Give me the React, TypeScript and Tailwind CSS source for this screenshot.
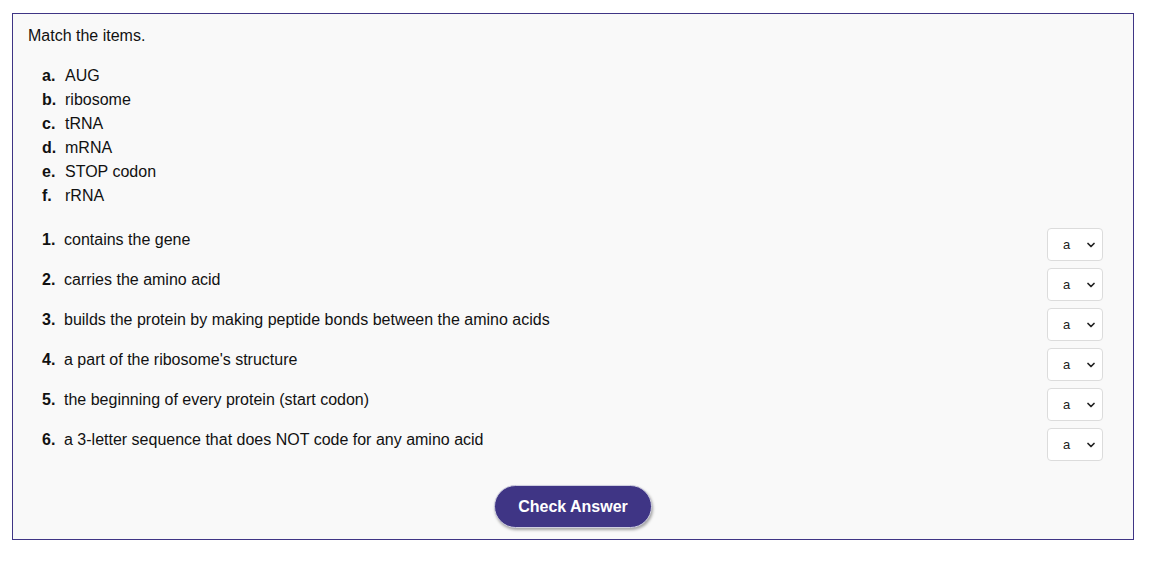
import { ChevronDown } from "lucide-react";

const items = [
    { key: "a", text: "AUG" },
    { key: "b", text: "ribosome" },
    { key: "c", text: "tRNA" },
    { key: "d", text: "mRNA" },
    { key: "e", text: "STOP codon" },
    { key: "f", text: "rRNA" },
];

const prompts = [
    "contains the gene",
    "carries the amino acid",
    "builds the protein by making peptide bonds between the amino acids",
    "a part of the ribosome's structure",
    "the beginning of every protein (start codon)",
    "a 3-letter sequence that does NOT code for any amino acid",
];

function Picker() {
    return (
        <div className="mt-[1px] flex h-[33px] w-[56px] items-center justify-between rounded-[4px] border border-[#dcdcdc] bg-white pl-[15px] pr-[5px] text-[13px] text-[#222]">
            <span>a</span>
            <ChevronDown className="h-[12px] w-[12px]" strokeWidth={3.5} />
        </div>
    );
}

export default function App() {
    return (
        <div className="min-h-screen bg-white pl-[12px] pt-[13px]" style={{ fontFamily: '"Liberation Sans", Arial, sans-serif' }}>
            <div className="w-[1122px] h-[527px] border border-[#3f3585] bg-[#f9f9f9] pl-[15px] pr-[30px] pt-[12px] text-[16px] text-[#111]">
                <p className="leading-[20px]">Match the items.</p>

                {/* word bank */}
                <ul className="mt-[18px] pl-[14px]">
                    {items.map((it) => (
                        <li key={it.key} className="flex leading-[24px]">
                            <span className="w-[23px] font-bold">{it.key}.</span>
                            <span>{it.text}</span>
                        </li>
                    ))}
                </ul>

                {/* prompts */}
                <div className="mt-[19px]">
                    {prompts.map((p, i) => (
                        <div key={i} className="flex h-[40px] items-start justify-between pl-[14px]">
                            <div className="flex pt-[3px] leading-[20px]">
                                <span className="w-[22px] font-bold">{i + 1}.</span>
                                <span>{p}</span>
                            </div>
                            <Picker />
                        </div>
                    ))}
                </div>

                <div className="mt-[18px] flex justify-center">
                    <button
                        type="button"
                        className="ml-[15px] h-[43px] w-[158px] rounded-full border border-[#cfcfe0] bg-[#3f3585] text-[16px] font-bold text-white shadow-[1px_2px_3px_rgba(0,0,0,0.35)]"
                    >
                        Check Answer
                    </button>
                </div>
            </div>
        </div>
    );
}
